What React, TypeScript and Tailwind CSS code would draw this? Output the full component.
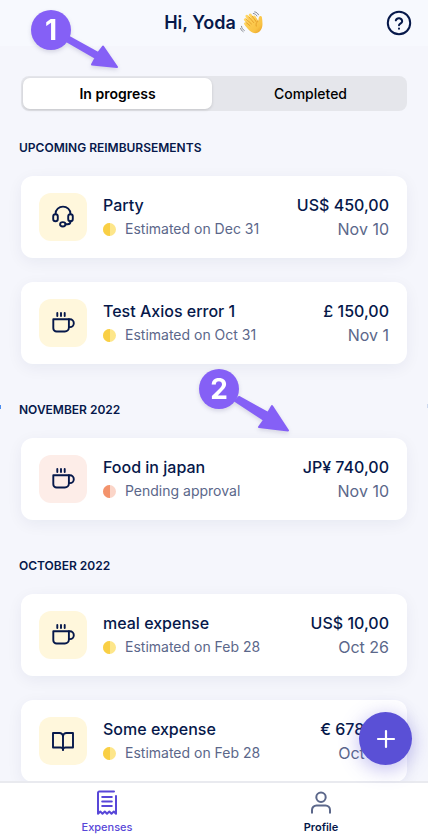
import type { ReactNode } from "react";

type IconName = "headset" | "cup" | "book";

type Expense = {
  title: string;
  status: string;
  tone: "yellow" | "orange";
  icon: IconName;
  amount: string;
  date: string;
};

type Group = { heading: string; expenses: Expense[] };

const groups: Group[] = [
  {
    heading: "UPCOMING REIMBURSEMENTS",
    expenses: [
      { title: "Party", status: "Estimated on Dec 31", tone: "yellow", icon: "headset", amount: "US$ 450,00", date: "Nov 10" },
      { title: "Test Axios error 1", status: "Estimated on Oct 31", tone: "yellow", icon: "cup", amount: "£ 150,00", date: "Nov 1" },
    ],
  },
  {
    heading: "NOVEMBER 2022",
    expenses: [
      { title: "Food in japan", status: "Pending approval", tone: "orange", icon: "cup", amount: "JP¥ 740,00", date: "Nov 10" },
    ],
  },
  {
    heading: "OCTOBER 2022",
    expenses: [
      { title: "meal expense", status: "Estimated on Feb 28", tone: "yellow", icon: "cup", amount: "US$ 10,00", date: "Oct 26" },
      { title: "Some expense", status: "Estimated on Feb 28", tone: "yellow", icon: "book", amount: "€ 678,00", date: "Oct 26" },
    ],
  },
];

const iconShapes: Record<IconName, ReactNode> = {
  headset: (
    <>
      <path d="M4.600 9V8.400a7.400 6.800 0 0 1 14.800 0V9" />
      <rect x="2.200" y="9.200" width="4.600" height="7" rx="2.300" />
      <rect x="17.200" y="9.200" width="4.600" height="7" rx="2.300" />
      <ellipse cx="11.800" cy="19.300" rx="2.700" ry="2.200" />
      <path d="M14.500 19.200h2.200c1.900 0 2.800-1.100 2.800-3" />
    </>
  ),
  cup: (
    <>
      <path d="M2.300 8.300h15.600v8.200a4 4 0 0 1-4 4H5.600a3.300 3.300 0 0 1-3.300-3.300z" />
      <path d="M17.900 8.300h1a3.700 3.700 0 0 1 0 7.800h-1" />
      <path d="M6.300 2v3M10 2v3M13.700 2v3" />
    </>
  ),
  book: (
    <>
      <path d="M2 4h6.500A3.500 3.300 0 0 1 12 7.300 3.500 3.300 0 0 1 15.500 4H22v14.500h-7.500A2.500 2.300 0 0 0 12 20.800a2.500 2.300 0 0 0-2.500-2.300H2z" />
      <path d="M12 7v14" />
    </>
  ),
};

function CategoryIcon({ name }: { name: IconName }) {
  return (
    <svg viewBox="0 0 24 24" className="size-6" fill="none" stroke="currentColor" strokeWidth="1.9" strokeLinecap="round" strokeLinejoin="round" aria-hidden="true">
      {iconShapes[name]}
    </svg>
  );
}

function WavingHand() {
  return (
    <svg viewBox="0 0 24 24" className="size-6" role="img" aria-label="Waving hand">
      <defs>
        <linearGradient id="skin" x1="0" y1="0" x2="1" y2="1">
          <stop offset="0" stopColor="#ffd662" />
          <stop offset="0.7" stopColor="#f9c243" />
          <stop offset="1" stopColor="#e59a24" />
        </linearGradient>
      </defs>
      <g stroke="url(#skin)" strokeWidth="2.900" strokeLinecap="round" fill="none">
        <path d="M12 14 5.300 8.700" />
        <path d="M13 12 6.900 5.200" />
        <path d="M15 11 10.300 4" />
        <path d="M17 11 14.200 6" />
        <path d="M10 16.500 5.400 12.700" />
      </g>
      <path d="M9.500 8.500 15.500 6.800l2.600 3.200c.7-1.500.3-3.300 1-4.300.8-1.200 2.500-.8 2.800.6.400 2.300.7 5.300.5 8-.3 4-2.900 7.900-7.100 7.900-3.400 0-5.400-2-7.300-4.100l-3-3.500z" fill="url(#skin)" />
      <path d="M6 7.800 11.500 13M9 6l4.700 5.600M12.400 5.300l3.700 5.300M5.800 11.200l4.100 3.400M18.100 10c-1.700 1.500-2.500 3-1.900 5.100" stroke="#dc8f1d" strokeWidth="0.700" strokeLinecap="round" fill="none" />
      <path d="M13.300 2.500c1.600.2 2.900 1.100 3.600 2.500M14.700.9c1.800.3 3.100 1.300 3.800 2.900M1.500 15.300c.2 1.800 1.200 3.300 2.800 4.200M.6 17.500c.5 1.400 1.300 2.400 2.500 3.200" stroke="#777b83" strokeWidth="0.900" strokeLinecap="round" fill="none" />
    </svg>
  );
}

function ExpenseCard({ expense }: { expense: Expense }) {
  const yellow = expense.tone === "yellow";
  return (
    <li className="flex items-center gap-4 rounded-xl bg-white px-[18px] py-[17px] shadow-[0_4px_16px_rgba(20,30,80,0.06)]">
      <span className={`flex size-12 shrink-0 items-center justify-center rounded-xl ${yellow ? "bg-[#fff7dc]" : "bg-[#fdede8]"}`}>
        <CategoryIcon name={expense.icon} />
      </span>
      <div className="min-w-0 flex-1">
        <h3 className="truncate text-base leading-6 font-medium">{expense.title}</h3>
        <p className="flex items-center gap-[9px] text-sm leading-6 text-[#5b678a]">
          <span className={`flex size-[13px] shrink-0 overflow-hidden rounded-full ${yellow ? "bg-[#fde68a]" : "bg-[#fbd5c8]"}`}>
            <span className={`w-1/2 ${yellow ? "bg-[#f9cf45]" : "bg-[#f3936c]"}`} />
          </span>
          <span className="truncate">{expense.status}</span>
        </p>
      </div>
      <div className="shrink-0 text-right text-base leading-6">
        <p className="font-medium">{expense.amount}</p>
        <p className="text-[#5b678a]">{expense.date}</p>
      </div>
    </li>
  );
}

function Callout({ label, arrow, place }: { label: string; arrow: string; place: string }) {
  return (
    <div className={`pointer-events-none absolute h-14 w-[100px] drop-shadow-[0_2px_2px_rgba(30,20,90,0.15)] ${place}`}>
      <svg viewBox="0 0 100 56" className="absolute inset-0 overflow-visible" width="100" height="56" aria-hidden="true">
        <path d={arrow} fill="#8560f6" stroke="#8560f6" strokeWidth="2" strokeLinejoin="round" />
      </svg>
      <span className="relative flex size-10 items-center justify-center rounded-full bg-[#8560f6] text-[28px] leading-10 font-bold text-white">
        {label}
      </span>
    </div>
  );
}

export default function App() {
  return (
    <div className="relative flex h-screen flex-col overflow-hidden bg-[#f5f6fc] font-[Inter,sans-serif] text-[#06184a]">
      <header className="relative flex h-[46px] shrink-0 items-center justify-center bg-[#f7f9fe]">
        <h1 className="flex items-center gap-1 text-lg font-semibold">
          Hi, Yoda <WavingHand />
        </h1>
        <button type="button" aria-label="Help" className="absolute right-4 size-[26px]">
          <svg viewBox="0 0 26 26" className="size-[26px]" fill="none" stroke="currentColor" strokeWidth="2" strokeLinecap="round" strokeLinejoin="round" aria-hidden="true">
            <circle cx="13" cy="13" r="11.200" />
            <path d="M9.800 10.400a3.300 3.300 0 0 1 6.400.9c0 2.100-3.200 2.500-3.200 4M13 18.600v.1" />
          </svg>
        </button>
      </header>

      <main className="min-h-0 flex-1 overflow-y-auto px-[21px] pt-[30px] [scrollbar-width:none]">
        <div role="tablist" className="grid grid-cols-2 gap-1 rounded-lg bg-[#e5e6eb] p-0.5 text-sm text-black">
          <button type="button" role="tab" aria-selected="true" className="h-[31px] rounded-[7px] bg-white font-semibold shadow-[0_1px_3px_rgba(0,0,0,0.15)]">
            In progress
          </button>
          <button type="button" role="tab" aria-selected="false" className="h-[31px] font-medium">
            Completed
          </button>
        </div>

        {groups.map((group) => (
          <section key={group.heading} className="pt-[27px] not-first-of-type:pt-9">
            <h2 className="-ml-0.5 text-xs leading-5 font-semibold">{group.heading}</h2>
            <ul className="mt-[18px] flex flex-col gap-6">
              {group.expenses.map((expense) => (
                <ExpenseCard key={expense.title} expense={expense} />
              ))}
            </ul>
          </section>
        ))}
      </main>

      <nav className="relative grid h-[55px] shrink-0 grid-cols-2 border-t-2 border-[#e9eaef] bg-white text-[11px] leading-4">
        <a href="#expenses" aria-current="page" className="flex flex-col items-center gap-[3px] pt-[7px] font-medium text-[#5847d8]">
          <svg viewBox="0 0 24 26" className="h-[26px] w-6" fill="none" stroke="currentColor" strokeWidth="2" strokeLinecap="round" strokeLinejoin="round" aria-hidden="true">
            <path d="M19 1.500H4.200A1.200 1.200 0 0 0 3 2.700V23.700l2.300-2.200 2.200 2.200 2.300-2.200 2.200 2.200 2.300-2.200 2.200 2.200 2.300-2.200 2.200 2.200V6" />
            <path d="M7.200 7h9.600M7.200 11.500h9.600M7.200 16h9.600" />
          </svg>
          Expenses
        </a>
        <a href="#profile" className="flex flex-col items-center gap-[3px] pt-[7px] font-semibold">
          <svg viewBox="0 0 24 26" className="h-[26px] w-6 text-[#5b678a]" fill="none" stroke="currentColor" strokeWidth="2" strokeLinecap="round" strokeLinejoin="round" aria-hidden="true">
            <circle cx="12" cy="7.200" r="4.700" />
            <path d="M3 22.700V20a4.500 4.500 0 0 1 4.500-4.500h9A4.500 4.500 0 0 1 21 20v2.700" />
          </svg>
          Profile
        </a>
        <button type="button" aria-label="Add expense" className="absolute right-4 bottom-[71px] flex size-[53px] items-center justify-center rounded-full bg-[#5a50d6] text-white shadow-[0_4px_20px_rgba(90,80,214,0.4)]">
          <svg viewBox="0 0 24 24" className="size-6" fill="none" stroke="currentColor" strokeWidth="2.200" strokeLinecap="round" aria-hidden="true">
            <path d="M12 4v16M4 12h16" />
          </svg>
        </button>
      </nav>

      <Callout label="1" place="top-[10px] left-[31px]" arrow="M38 27 67 43 72 36.500 86 57 61 54.500 64.500 48 35 31z" />
      <Callout label="2" place="top-[369px] left-[199px]" arrow="M40 28 69 44 73 37 89 61.500 60 58 65 51 36 32z" />
      <span className="absolute top-[405px] left-0 h-1 w-px bg-[#4a8df0]" />
      <span className="absolute top-[404px] right-0 h-1 w-px bg-[#ccd8ee]" />
    </div>
  );
}
